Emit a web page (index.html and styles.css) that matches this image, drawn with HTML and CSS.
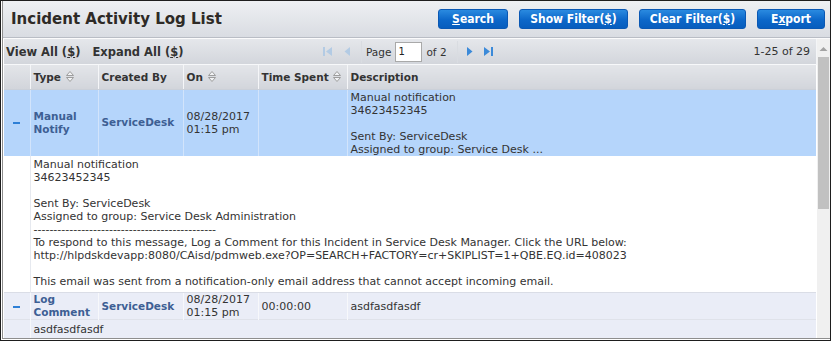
FILE: index.html
```html
<!DOCTYPE html>
<html>
<head>
<meta charset="utf-8">
<link rel="stylesheet" href="styles.css">
</head>
<body>
<div class="frame">
  <div class="inner">
    <div class="titlebar">
      <h1 class="title">Incident Activity Log List</h1>
      <div class="btns">
        <button class="btn btn-search"><u>S</u>earch</button>
        <button class="btn btn-show">Show Filter(<u>$</u>)</button>
        <button class="btn btn-clear">Clear Filter(<u>$</u>)</button>
        <button class="btn btn-export">E<u>x</u>port</button>
      </div>
    </div>
    <div class="content">
      <div class="main">
        <div class="toolbar">
          <div class="links">
            <span class="lnk">View All (<u>$</u>)</span>
            <span class="lnk">Expand All (<u>$</u>)</span>
          </div>
          <div class="pager">
            <svg class="pg pg-first" width="10" height="11" viewBox="0 0 10 11"><rect x="0" y="1" width="2" height="9" fill="#b3cbe4"/><path d="M9 1 L3 5.5 L9 10 Z" fill="#b3cbe4"/></svg>
            <svg class="pg pg-prev" width="7" height="11" viewBox="0 0 7 11"><path d="M6 1 L0.5 5.5 L6 10 Z" fill="#b3cbe4"/></svg>
            <span class="sep"></span>
            <span class="pg-label">Page</span>
            <span class="pg-input">1</span>
            <span class="pg-label">of 2</span>
            <span class="sep"></span>
            <svg class="pg pg-next" width="7" height="11" viewBox="0 0 7 11"><path d="M1 1 L6.5 5.5 L1 10 Z" fill="#3b8ad9"/></svg>
            <svg class="pg pg-last" width="11" height="11" viewBox="0 0 11 11"><path d="M1 1 L7 5.5 L1 10 Z" fill="#3b8ad9"/><rect x="8" y="1" width="2" height="9" fill="#3b8ad9"/></svg>
          </div>
          <div class="count">1-25 of 29</div>
        </div>
        <table class="grid">
          <colgroup>
            <col class="c0"><col class="c1"><col class="c2"><col class="c3"><col class="c4"><col class="c5">
          </colgroup>
          <thead>
            <tr class="hdr">
              <th></th>
              <th>Type <svg class="sort" width="10" height="13" viewBox="0 0 10 13"><path d="M1.5 5.5 L5 1.5 L8.5 5.5 Z" fill="#f2f3f5" stroke="#9d9d9d"/><path d="M1.5 7.5 L5 11.5 L8.5 7.5 Z" fill="#f2f3f5" stroke="#9d9d9d"/></svg></th>
              <th>Created By</th>
              <th>On <svg class="sort" width="10" height="13" viewBox="0 0 10 13"><path d="M1.5 5.5 L5 1.5 L8.5 5.5 Z" fill="#f2f3f5" stroke="#9d9d9d"/><path d="M1.5 7.5 L5 11.5 L8.5 7.5 Z" fill="#f2f3f5" stroke="#9d9d9d"/></svg></th>
              <th>Time Spent <svg class="sort" width="10" height="13" viewBox="0 0 10 13"><path d="M1.5 5.5 L5 1.5 L8.5 5.5 Z" fill="#f2f3f5" stroke="#9d9d9d"/><path d="M1.5 7.5 L5 11.5 L8.5 7.5 Z" fill="#f2f3f5" stroke="#9d9d9d"/></svg></th>
              <th>Description</th>
            </tr>
          </thead>
          <tbody>
            <tr class="row sel r1">
              <td class="tog"><span class="minus"></span></td>
              <td class="bold">Manual<br>Notify</td>
              <td class="bold">ServiceDesk</td>
              <td>08/28/2017<br>01:15 pm</td>
              <td></td>
              <td class="top">Manual notification<br>34623452345<br><br>Sent By: ServiceDesk<br>Assigned to group: Service Desk ...</td>
            </tr>
            <tr class="detail d1">
              <td></td>
              <td colspan="5">Manual notification<br>34623452345<br><br>Sent By: ServiceDesk<br>Assigned to group: Service Desk Administration<br>----------------------------------------------<br>To respond to this message, Log a Comment for this Incident in Service Desk Manager. Click the URL below:<br>http://hlpdskdevapp:8080/CAisd/pdmweb.exe?OP=SEARCH+FACTORY=cr+SKIPLIST=1+QBE.EQ.id=408023<br><br>This email was sent from a notification-only email address that cannot accept incoming email.</td>
            </tr>
            <tr class="row alt r2">
              <td class="tog"><span class="minus"></span></td>
              <td class="bold">Log<br>Comment</td>
              <td class="bold">ServiceDesk</td>
              <td>08/28/2017<br>01:15 pm</td>
              <td>00:00:00</td>
              <td>asdfasdfasdf</td>
            </tr>
            <tr class="detail alt d2">
              <td></td>
              <td colspan="5">asdfasdfasdf</td>
            </tr>
          </tbody>
        </table>
      </div>
      <div class="scrollbar">
        <svg class="sb-arrow" width="9" height="6" viewBox="0 0 9 6"><path d="M0.5 5 L4.5 1 L8.5 5 Z" fill="#a3a3a3"/></svg>
        <div class="sb-thumb"></div>
      </div>
    </div>
  </div>
</div>
</body>
</html>
```

FILE: styles.css
```css
* { box-sizing: border-box; }
html, body { margin: 0; padding: 0; background: #ffffff; }
body { font-family: "DejaVu Sans", Verdana, sans-serif; font-size: 11px; color: #333; }

.frame {
  width: 831px;
  height: 341px;
  border: 1px solid #1e1e1e;
  overflow: hidden;
  background: #fff;
}
.inner {
  height: 338px;
  margin-left: 1px;
  border-left: 1px solid #8e8e8e;
  border-bottom: 1px solid #8e8e8e;
  display: flex;
  flex-direction: column;
}

.titlebar {
  height: 37px;
  flex: none;
  display: flex;
  align-items: center;
  justify-content: space-between;
  background: linear-gradient(#eef0f3, #d9dce2);
  border-bottom: 1px solid #b9bdc5;
  padding: 0 5px 1px 8px;
}
.title {
  margin: 0;
  font-family: "DejaVu Sans", Verdana, sans-serif;
  font-weight: bold;
  font-size: 15px;
  color: #2e2a26;
}
.btns { display: flex; gap: 11px; align-items: center; }
.btn {
  height: 20px;
  padding: 0;
  border: 1px solid #0a58b4;
  border-radius: 3px;
  background: linear-gradient(#2a8ae0, #0c67c9 55%, #075dbd);
  color: #fff;
  font-family: "DejaVu Sans Condensed", "DejaVu Sans", sans-serif;
  font-weight: bold;
  font-size: 12px;
  line-height: 18px;
  text-align: center;
}
.btn-search { width: 70px; }
.btn-show { width: 109px; }
.btn-clear { width: 107px; }
.btn-export { width: 68px; }

.content {
  flex: 1;
  display: flex;
  min-height: 0;
  border-top: 1px solid #fbfbfc;
}
.main {
  flex: 1;
  min-width: 0;
  padding-left: 1px;
  overflow: hidden;
}

.toolbar {
  height: 26px;
  display: flex;
  align-items: center;
  background: linear-gradient(#e5e7eb, #d3d6dc);
  border-right: 1px solid #f4f5f7;
  border-bottom: 1px solid #f7f8fa;
  padding: 0 6px 0 2px;
}
.links { display: flex; gap: 12px; width: 312px; }
.lnk { font-weight: bold; font-size: 11.5px; color: #333; }
.pager { display: flex; align-items: center; flex: 1; height: 100%; }
.pg { flex: none; }
.pg-first { margin-left: 5px; }
.pg-prev { margin-left: 11px; }
.sep { width: 1px; height: 22px; background: #d9dce1; margin: 0 4px 0 10px; }
.pg-label { font-size: 10.5px; color: #333; }
.pg-input {
  width: 27px;
  height: 20px;
  margin: 0 4px 0 4px;
  background: #fff;
  border: 1px solid #a9a9a9;
  font-size: 10px;
  line-height: 18px;
  padding-left: 2px;
  color: #222;
}
.pager .sep + .pg-next { margin-left: 4px; }
.pg-last { margin-left: 10px; }
.count { font-size: 11px; color: #333; }

.grid {
  width: 812px;
  border-collapse: collapse;
  table-layout: fixed;
}
.c0 { width: 26px; }
.c1 { width: 68px; }
.c2 { width: 85px; }
.c3 { width: 75px; }
.c4 { width: 89px; }
.c5 { width: 469px; }

.hdr th {
  height: 24px;
  background: linear-gradient(#e3e5e9, #d2d5db);
  text-align: left;
  font-weight: bold;
  font-size: 10.5px;
  color: #333;
  padding: 0 3px;
  border-left: 1px solid #f5f6f8;
  border-bottom: 1px solid #cbd0d8;
  white-space: nowrap;
}
.hdr th:first-child { border-left: none; }
.sort { vertical-align: -2px; }

td {
  padding: 0 3px;
  font-size: 11px;
  line-height: 13px;
  color: #333;
  vertical-align: middle;
  border-left: 1px solid #e4e7ee;
}
td:first-child { border-left: none; }
td.top { vertical-align: top; padding-top: 1px; }
td.bold { font-weight: bold; color: #3d5f94; font-size: 10.5px; }

.sel td { background: #b5d5fb; border-left-color: #d2e4fb; border-top: 1px solid #c9dffa; }
.r1 td { height: 66px; }
.tog { text-align: center; }
.minus { display: inline-block; width: 7px; height: 2px; background: #2d7fd6; vertical-align: middle; }

.detail td { background: #fff; vertical-align: top; border-left-color: #e6e9ef; }
.d1 td { height: 137px; padding-top: 2px; }
.alt td { background: #eaedf7; border-left-color: #f7f8fb; }
.r2 td { height: 27px; border-top: 1px solid #dadde6; }
.d2 td { height: 22px; border-top: 1px solid #dfe2ea; padding-top: 3px; }

.scrollbar {
  width: 13px;
  flex: none;
  background: #f0f0f0;
  padding-top: 7px;
  display: flex;
  flex-direction: column;
  align-items: center;
}
.sb-arrow { flex: none; }
.sb-thumb {
  margin-top: 5px;
  width: 11px;
  height: 152px;
  background: #c1c1c1;
}
```
